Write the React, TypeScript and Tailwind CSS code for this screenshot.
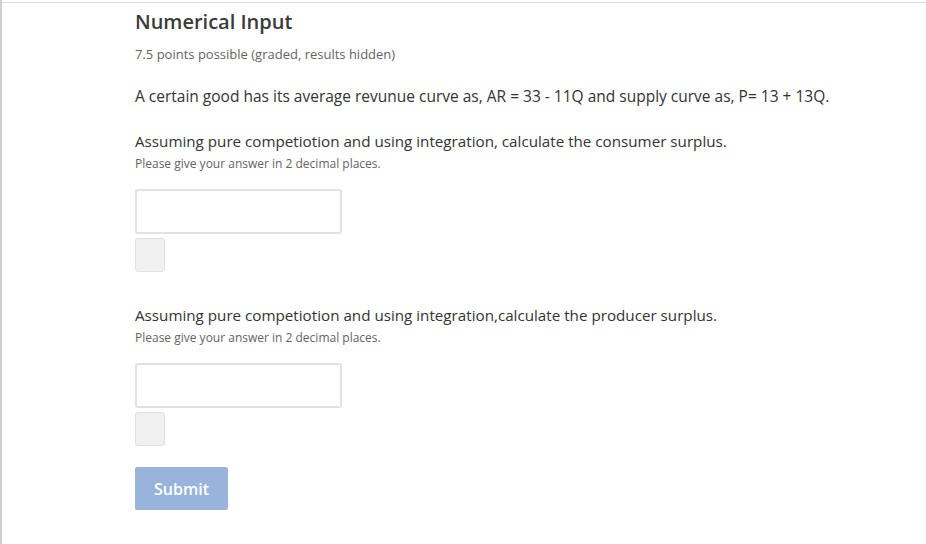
export default function App() {
  const questions = [
    "Assuming pure competiotion and using integration, calculate the consumer surplus.",
    "Assuming pure competiotion and using integration,calculate the producer surplus.",
  ];

  return (
    <div
      className="min-h-[544px] w-[926px] bg-white border-l-2 border-[#cfcfcf]"
      style={{ fontFamily: '"Open Sans", "Liberation Sans", sans-serif' }}
    >
      <div className="h-[2px]" />
      <div className="border-t border-[#dcdcdc] pl-[133px] pt-[5px]">
        <h3 className="text-[20px] leading-[27px] font-semibold text-[#3a3a3a]">Numerical Input</h3>
        <div className="mt-[10px] text-[13px] leading-[18px] text-[#646464]">
          7.5 points possible (graded, results hidden)
        </div>
        <p className="mt-[23px] text-[15.5px] leading-[20px] text-[#333]">
          A certain good has its average revunue curve as, AR = 33 - 11Q and supply curve as, P= 13 + 13Q.
        </p>

        {questions.map((q, i) => (
          <div key={i} className={i === 0 ? "mt-[25px]" : "mt-[33px]"}>
            <p className="text-[15.2px] leading-[20px] text-[#333]">{q}</p>
            <p className="mt-[5px] text-[12px] leading-[16px] text-[#646464]">
              Please give your answer in 2 decimal places.
            </p>
            <input
              type="text"
              className="mt-[17px] block w-[207px] h-[45px] border-2 border-[#e2e2e2] rounded-[3px] px-2 text-[15px] outline-none"
            />
            <div className="mt-[4px] w-[30px] h-[34px] rounded-[3px] border border-[#e0e0e0] bg-[#f0f0f0]" />
          </div>
        ))}

        <button className="mt-[21px] w-[93px] h-[43px] rounded-[2px] bg-[#98b4da] text-white text-[16px] font-semibold">
          Submit
        </button>
      </div>
    </div>
  );
}
